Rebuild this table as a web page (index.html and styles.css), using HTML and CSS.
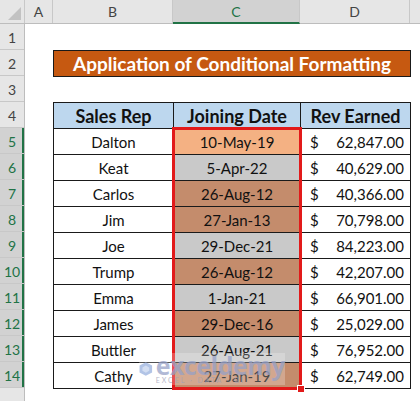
FILE: index.html
```html
<!DOCTYPE html>
<html>
<head>
<meta charset="utf-8">
<link rel="stylesheet" href="styles.css">
</head>
<body>
<div class="sheet">
  <div class="colheads">
    <div class="corner"><span class="tri"></span></div>
    <div class="ch cA">A</div>
    <div class="ch cB">B</div>
    <div class="ch cC sel">C</div>
    <div class="ch cD">D</div>
    <div class="ch cE"></div>
  </div>
  <div class="body">
    <div class="rowheads">
      <div class="rh">1</div>
      <div class="rh">2</div>
      <div class="rh">3</div>
      <div class="rh">4</div>
      <div class="rh sel">5</div>
      <div class="rh sel">6</div>
      <div class="rh sel">7</div>
      <div class="rh sel">8</div>
      <div class="rh sel">9</div>
      <div class="rh sel">10</div>
      <div class="rh sel">11</div>
      <div class="rh sel">12</div>
      <div class="rh sel">13</div>
      <div class="rh sel">14</div>
      <div class="rh last"></div>
    </div>
    <div class="grid">
      <div class="spacer"></div>
      <div class="title">Application of Conditional Formatting</div>
      <div class="spacer"></div>
      <table class="data">
        <thead>
          <tr><th>Sales Rep</th><th>Joining Date</th><th>Rev Earned</th></tr>
        </thead>
        <tbody>
          <tr><td>Dalton</td><td class="d salmon">10-May-19</td><td class="m"><span>$</span><span>62,847.00</span></td></tr>
          <tr><td>Keat</td><td class="d gray">5-Apr-22</td><td class="m"><span>$</span><span>40,629.00</span></td></tr>
          <tr><td>Carlos</td><td class="d brown">26-Aug-12</td><td class="m"><span>$</span><span>40,366.00</span></td></tr>
          <tr><td>Jim</td><td class="d brown">27-Jan-13</td><td class="m"><span>$</span><span>70,798.00</span></td></tr>
          <tr><td>Joe</td><td class="d gray">29-Dec-21</td><td class="m"><span>$</span><span>84,223.00</span></td></tr>
          <tr><td>Trump</td><td class="d brown">26-Aug-12</td><td class="m"><span>$</span><span>42,207.00</span></td></tr>
          <tr><td>Emma</td><td class="d gray">1-Jan-21</td><td class="m"><span>$</span><span>66,901.00</span></td></tr>
          <tr><td>James</td><td class="d brown">29-Dec-16</td><td class="m"><span>$</span><span>25,029.00</span></td></tr>
          <tr><td>Buttler</td><td class="d gray">26-Aug-21</td><td class="m"><span>$</span><span>76,952.00</span></td></tr>
          <tr><td>Cathy</td><td class="d brown">27-Jan-19</td><td class="m"><span>$</span><span>62,749.00</span></td></tr>
        </tbody>
      </table>
      <div class="selection"><span class="handle"></span></div>
      <div class="watermark">
        <svg class="wm-logo" width="26" height="28" viewBox="0 0 24 26"><polygon points="12,1 23,7 23,19 12,25 1,19 1,7" fill="#9fb6e0"/><polygon points="12,7 18,10.5 18,16 12,19.5 6,16 6,10.5" fill="#c9d6ef"/></svg>
        <div class="wm-text"><span class="wm-name">exceldemy</span><span class="wm-sub">EXCEL · DATA · BI</span></div>
      </div>
    </div>
  </div>
</div>
</body>
</html>
```
FILE: styles.css
```css
html, body {
  margin: 0;
  padding: 0;
  background: #ffffff;
}
body {
  width: 420px;
  height: 401px;
  overflow: hidden;
  font-family: "Lato", "Open Sans", sans-serif;
}
.sheet {
  display: flex;
  flex-direction: column;
  width: 420px;
  height: 401px;
}
.colheads {
  display: flex;
  height: 24px;
  background: #e6e6e6;
  border-bottom: 1px solid #bdbdbd;
  box-sizing: border-box;
}
.corner {
  width: 25px;
  box-sizing: border-box;
  border-right: 1px solid #c8c8c8;
  position: relative;
}
.tri {
  position: absolute;
  right: 3px;
  bottom: 3px;
  width: 0;
  height: 0;
  border-left: 13px solid transparent;
  border-bottom: 13px solid #c2c2c2;
}
.ch {
  box-sizing: border-box;
  border-right: 1px solid #c8c8c8;
  display: flex;
  align-items: center;
  justify-content: center;
  font-size: 14px;
  color: #444;
}
.cA { width: 28px; }
.cB { width: 120px; }
.cC { width: 127px; }
.cD { width: 110px; }
.cE { flex: 1; border-right: none; }
.ch.sel {
  background: #d2d2d2;
  border-bottom: 2px solid #217346;
  color: #217346;
  margin-bottom: -1px;
}
.body {
  display: flex;
  flex: 1;
}
.rowheads {
  width: 25px;
  display: flex;
  flex-direction: column;
  background: #e6e6e6;
  border-right: 1px solid #bdbdbd;
  box-sizing: border-box;
}
.rh {
  height: 26px;
  flex: none;
  box-sizing: border-box;
  border-bottom: 1px solid #c8c8c8;
  display: flex;
  align-items: center;
  justify-content: center;
  font-size: 14px;
  color: #444;
  padding-top: 2px;
}
.rh.sel {
  background: #d2d2d2;
  color: #217346;
  box-shadow: inset -2px 0 0 #217346;
}
.rh.last {
  flex: 1;
  border-bottom: none;
}
.grid {
  position: relative;
  flex: 1;
  padding-left: 28px;
}
.spacer {
  height: 26px;
}
.title {
  width: 358px;
  height: 27px;
  margin-bottom: -1px;
  box-sizing: border-box;
  background: #c65911;
  border: 1px solid #1a1a1a;
  color: #ffffff;
  font-weight: 700;
  font-size: 19px;
  display: flex;
  align-items: center;
  justify-content: center;
}
.data {
  border-collapse: collapse;
  table-layout: fixed;
  width: 358px;
  margin-left: 0;
}
.data th, .data td {
  height: 26px;
  border: 1px solid #1a1a1a;
  padding: 0;
  text-align: center;
  font-size: 15px;
  color: #111;
  box-sizing: border-box;
}
.data th:nth-child(1) { width: 120px; }
.data th:nth-child(2) { width: 127px; }
.data th:nth-child(3) { width: 110px; }
.data th {
  background: #bdd7ee;
  font-weight: 700;
  font-size: 18px;
}
.data td.m {
  padding: 0 6px 0 9px;
}
.data td.m span:first-child { float: left; }
.data td.m span:last-child { float: right; }
.salmon { background: #f4b183; }
.gray { background: #c9c9c9; }
.brown { background: #c48c6c; }
.selection {
  position: absolute;
  left: 147px;
  top: 103px;
  width: 130px;
  height: 263px;
  border: 3px solid #e21a1a;
  box-sizing: border-box;
}
.handle {
  position: absolute;
  right: -6px;
  bottom: -6px;
  width: 6px;
  height: 6px;
  background: #e21a1a;
  border: 1px solid #fff;
}
.watermark {
  position: absolute;
  left: 114px;
  top: 329px;
  width: 146px;
  height: 32px;
  display: flex;
  align-items: center;
  gap: 3px;
  background: rgba(255, 255, 255, 0.3);
  opacity: 0.8;
}
.wm-text {
  display: flex;
  flex-direction: column;
  line-height: 1;
}
.wm-name {
  font-family: "Open Sans", sans-serif;
  font-weight: 700;
  font-size: 25px;
  color: #9ea8cc;
  letter-spacing: -0.5px;
  line-height: 0.9;
}
.wm-sub {
  font-size: 7px;
  color: #a8a8bc;
  letter-spacing: 2px;
}
```
